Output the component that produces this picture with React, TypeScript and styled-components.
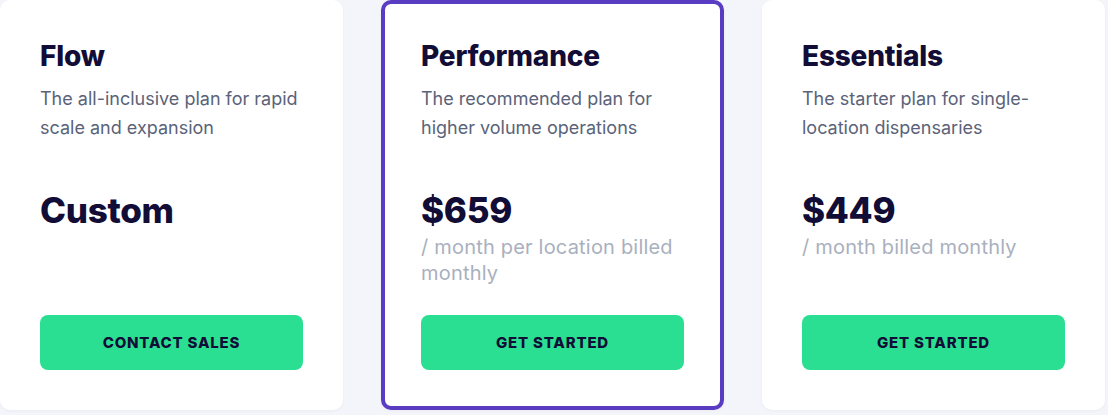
import React from 'react';
import styled, { createGlobalStyle } from 'styled-components';

const GlobalStyle = createGlobalStyle`
    html, body {
        margin: 0;
        padding: 0;
        background-color: #f3f5fa;
    }
    * {
        box-sizing: border-box;
    }
`;

const Page = styled.div`
    width: 1108px;
    height: 415px;
    overflow: hidden;

    display: grid;
    grid-template-columns: repeat(3, 343px);
    column-gap: 38px;
    align-items: start;

    font-family: 'Inter', 'Liberation Sans', sans-serif;
`;

const Card = styled.div<{ highlighted?: boolean }>`
    height: 410px;
    display: flex;
    flex-direction: column;

    padding: ${({ highlighted }) => (highlighted ? '34px 36px 36px' : '38px 40px 40px')};
    border: ${({ highlighted }) => (highlighted ? '4px solid #5a3cc3' : 'none')};
    border-radius: 10px;

    background-color: #fff;
    box-shadow: 0 1px 3px rgba(20, 30, 70, 0.04);
`;

const Title = styled.h2`
    margin: 0;
    font-weight: 800;
    font-size: 28px;
    line-height: 36px;
    letter-spacing: -0.2px;
    color: #110d36;
`;

const Description = styled.p`
    margin: 10px 0 0;
    font-weight: 400;
    font-size: 18px;
    line-height: 29px;
    color: #5a6379;
`;

const Price = styled.div`
    margin-top: 47px;
    font-weight: 800;
    font-size: 35px;
    line-height: 42px;
    letter-spacing: -0.3px;
    color: #110d36;
`;

const Billing = styled.div`
    margin-top: 3px;
    font-weight: 400;
    font-size: 20px;
    line-height: 26px;
    letter-spacing: 0.2px;
    color: #a9b0be;
`;

const Button = styled.button`
    margin-top: auto;
    width: 100%;
    height: 55px;

    border: none;
    border-radius: 8px;
    background-color: #2bdf92;

    font-family: inherit;
    font-weight: 800;
    font-size: 15px;
    letter-spacing: 0.8px;
    color: #110d36;
    cursor: pointer;
`;

type TPlan = {
    name: string;
    description: string;
    price: string;
    billing?: string;
    action: string;
    highlighted?: boolean;
};

const plans: TPlan[] = [
    {
        name: 'Flow',
        description: 'The all-inclusive plan for rapid scale and expansion',
        price: 'Custom',
        action: 'CONTACT SALES',
    },
    {
        name: 'Performance',
        description: 'The recommended plan for higher volume operations',
        price: '$659',
        billing: '/ month per location billed monthly',
        action: 'GET STARTED',
        highlighted: true,
    },
    {
        name: 'Essentials',
        description: 'The starter plan for single-location dispensaries',
        price: '$449',
        billing: '/ month billed monthly',
        action: 'GET STARTED',
    },
];

const App: React.FC = () => {
    return (
        <>
            <GlobalStyle />
            <Page>
                {plans.map((plan) => (
                    <Card key={plan.name} highlighted={plan.highlighted}>
                        <Title>{plan.name}</Title>
                        <Description>{plan.description}</Description>
                        <Price>{plan.price}</Price>
                        {plan.billing && <Billing>{plan.billing}</Billing>}
                        <Button>{plan.action}</Button>
                    </Card>
                ))}
            </Page>
        </>
    );
};

export default App;
